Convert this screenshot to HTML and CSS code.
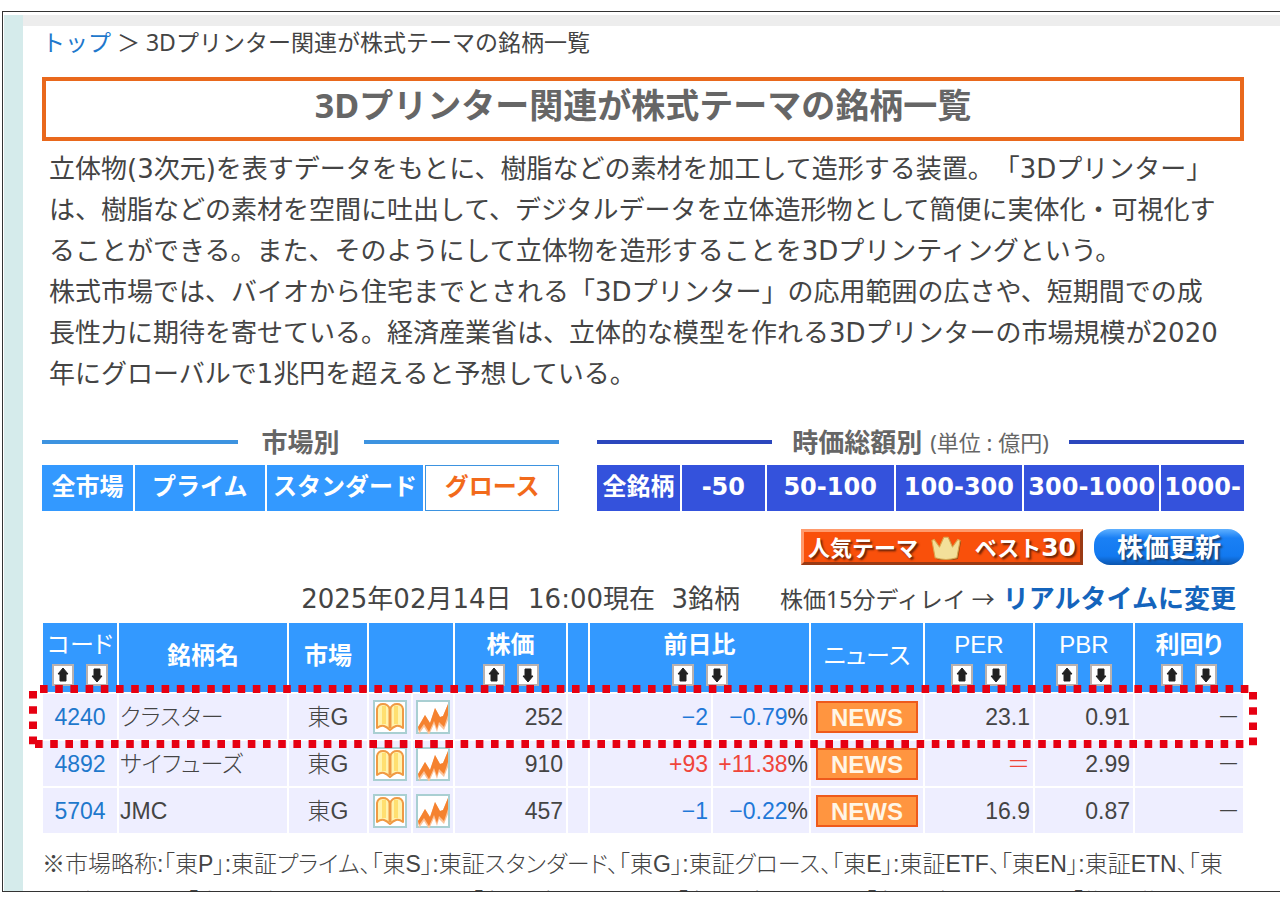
FILE: index.html
```
<!DOCTYPE html>
<html lang="ja">

<head>
    <meta charset="UTF-8">
    <meta name="viewport" content="width=device-width, initial-scale=1.0">
    <title>3Dプリンター関連が株式テーマの銘柄一覧</title>
    <link rel="stylesheet" href="styles.css">
</head>

<body>

    <!-- 共通アイコン -->
    <svg class="sprite" aria-hidden="true">
        <symbol id="up" viewBox="0 0 22 22">
            <rect x="1" y="1" width="20" height="20" fill="#fff" stroke="#b9b1ae" stroke-width="2" />
            <path d="M11 4l5 6h-2v7H8v-7H6z" fill="#222" stroke="#222" stroke-linejoin="round" />
        </symbol>
        <symbol id="down" viewBox="0 0 22 22">
            <rect x="1" y="1" width="20" height="20" fill="#fff" stroke="#b9b1ae" stroke-width="2" />
            <path d="M11 18l5-6h-2V5H8v7H6z" fill="#222" stroke="#222" stroke-linejoin="round" />
        </symbol>
        <symbol id="book" viewBox="0 0 34 34">
            <rect x="1" y="1" width="32" height="32" fill="#fff" stroke="#a9cfd2" stroke-width="2" />
            <path d="M4 9q1-5 6-5 5 0 7 5 2-5 7-5 5 0 6 5v19q-4-3-7-2t-6 4q-3-3-6-4t-7 2z" fill="#fff3ae" stroke="#f09a44" stroke-width="2" stroke-linejoin="round" />
            <path d="M11 6v18M23 6v18" fill="none" stroke="#ffdf70" stroke-width="4" />
            <path d="M17 8v20" fill="none" stroke="#f09a44" stroke-width="3" />
        </symbol>
        <symbol id="chart" viewBox="0 0 34 34">
            <rect x="1" y="1" width="32" height="32" fill="#fff" stroke="#a9cfd2" stroke-width="2" />
            <path d="M2 27l3-5 4-7 5 8 5-15 5 9 3-1 5-12v16l-4 10-5-5-2 7-3-8-5 11-5-8-5 7z" fill="#fbc39a" />
            <path d="M2 27l3-5 4-7 5 8 5-15 5 9 3-1 5-12v11l-4 12-5-5-2 7-3-8-5 11-5-8-5 7z" fill="#f5822f" />
        </symbol>
    </svg>

    <div class="frame">
        <div class="side"></div>
        <div class="page">
            <div class="topbar"></div>
            <div class="content">

                <nav class="breadcrumb"><a href="#">トップ</a> ＞ 3Dプリンター関連が株式テーマの銘柄一覧</nav>

                <h1>3Dプリンター関連が株式テーマの銘柄一覧</h1>

                <p class="description">
                    立体物(3次元)を表すデータをもとに、樹脂などの素材を加工して造形する装置。「3Dプリンター」<br>は、樹脂などの素材を空間に吐出して、デジタルデータを立体造形物として簡便に実体化・可視化す<br>ることができる。また、そのようにして立体物を造形することを3Dプリンティングという。<br>株式市場では、バイオから住宅までとされる「3Dプリンター」の応用範囲の広さや、短期間での成<br>長性力に期待を寄せている。経済産業省は、立体的な模型を作れる3Dプリンターの市場規模が2020<br>年にグローバルで1兆円を超えると予想している。
                </p>

                <div class="filters">
                    <div class="filter market">
                        <h2>市場別</h2>
                        <div class="tabs">
                            <a href="#" class="t91">全市場</a>
                            <a href="#" class="t130">プライム</a>
                            <a href="#" class="t157">スタンダード</a>
                            <a href="#" class="t132 active">グロース</a>
                        </div>
                    </div>
                    <div class="filter cap">
                        <h2>時価総額別 <small>(単位 : 億円)</small></h2>
                        <div class="tabs">
                            <a href="#" class="t83">全銘柄</a>
                            <a href="#" class="t83">-50</a>
                            <a href="#" class="t127">50-100</a>
                            <a href="#" class="t127">100-300</a>
                            <a href="#" class="t135">300-1000</a>
                            <a href="#" class="t83">1000-</a>
                        </div>
                    </div>
                </div>

                <div class="buttons">
                    <a href="#" class="best"><span>人気テーマ</span>
                        <svg width="32" height="26" viewBox="0 0 28 24" aria-hidden="true">
                            <path d="M4 22L1 6l2-1 5 7 4-9h4l4 9 5-7 2 1-3 16q-10 3-20 0z" fill="#9a4a12" transform="translate(1 1)" />
                            <path d="M4 22L1 6l2-1 5 7 4-9h4l4 9 5-7 2 1-3 16q-10 3-20 0z" fill="#f3e09a" stroke="#d9a650" stroke-linejoin="round" />
                        </svg>
                        <span>ベスト<b>30</b></span></a>
                    <button type="button" class="update">株価更新</button>
                </div>

                <div class="status">
                    <span class="date">2025年02月14日&nbsp; 16:00現在&nbsp; 3銘柄</span>
                    <span class="delay">株価15分ディレイ →</span>
                    <a href="#">リアルタイムに変更</a>
                </div>

                <div class="table-wrap">
                    <table>
                        <colgroup>
                            <col class="c-code">
                            <col class="c-name">
                            <col class="c-market">
                            <col class="c-book">
                            <col class="c-chart">
                            <col class="c-price">
                            <col class="c-gap">
                            <col class="c-diff">
                            <col class="c-pct">
                            <col class="c-news">
                            <col class="c-per">
                            <col class="c-pbr">
                            <col class="c-yield">
                        </colgroup>
                        <thead>
                            <tr>
                                <th class="thin">コード<div class="sort"><a href="#" aria-label="昇順"><svg><use href="#up" /></svg></a><a href="#" aria-label="降順"><svg><use href="#down" /></svg></a></div></th>
                                <th>銘柄名</th>
                                <th>市場</th>
                                <th colspan="2"></th>
                                <th>株価<div class="sort"><a href="#" aria-label="昇順"><svg><use href="#up" /></svg></a><a href="#" aria-label="降順"><svg><use href="#down" /></svg></a></div></th>
                                <th></th>
                                <th colspan="2">前日比<div class="sort"><a href="#" aria-label="昇順"><svg><use href="#up" /></svg></a><a href="#" aria-label="降順"><svg><use href="#down" /></svg></a></div></th>
                                <th class="thin">ニュース</th>
                                <th class="thin">PER<div class="sort"><a href="#" aria-label="昇順"><svg><use href="#up" /></svg></a><a href="#" aria-label="降順"><svg><use href="#down" /></svg></a></div></th>
                                <th class="thin">PBR<div class="sort"><a href="#" aria-label="昇順"><svg><use href="#up" /></svg></a><a href="#" aria-label="降順"><svg><use href="#down" /></svg></a></div></th>
                                <th>利回り<div class="sort"><a href="#" aria-label="昇順"><svg><use href="#up" /></svg></a><a href="#" aria-label="降順"><svg><use href="#down" /></svg></a></div></th>
                            </tr>
                        </thead>
                        <tbody>
                            <tr>
                                <td class="center"><a href="#">4240</a></td>
                                <td class="name">クラスター</td>
                                <td class="center">東G</td>
                                <td class="icon"><a href="#" aria-label="基本情報"><svg><use href="#book" /></svg></a></td>
                                <td class="icon"><a href="#" aria-label="チャート"><svg><use href="#chart" /></svg></a></td>
                                <td>252</td>
                                <td></td>
                                <td class="down">−2</td>
                                <td class="pct"><span class="down">−0.79</span>%</td>
                                <td class="icon"><a href="#" class="news">NEWS</a></td>
                                <td>23.1</td>
                                <td>0.91</td>
                                <td>－</td>
                            </tr>
                            <tr>
                                <td class="center"><a href="#">4892</a></td>
                                <td class="name">サイフューズ</td>
                                <td class="center">東G</td>
                                <td class="icon"><a href="#" aria-label="基本情報"><svg><use href="#book" /></svg></a></td>
                                <td class="icon"><a href="#" aria-label="チャート"><svg><use href="#chart" /></svg></a></td>
                                <td>910</td>
                                <td></td>
                                <td class="up">+93</td>
                                <td class="pct"><span class="up">+11.38</span>%</td>
                                <td class="icon"><a href="#" class="news">NEWS</a></td>
                                <td class="up">＝</td>
                                <td>2.99</td>
                                <td>－</td>
                            </tr>
                            <tr>
                                <td class="center"><a href="#">5704</a></td>
                                <td class="name">JMC</td>
                                <td class="center">東G</td>
                                <td class="icon"><a href="#" aria-label="基本情報"><svg><use href="#book" /></svg></a></td>
                                <td class="icon"><a href="#" aria-label="チャート"><svg><use href="#chart" /></svg></a></td>
                                <td>457</td>
                                <td></td>
                                <td class="down">−1</td>
                                <td class="pct"><span class="down">−0.22</span>%</td>
                                <td class="icon"><a href="#" class="news">NEWS</a></td>
                                <td>16.9</td>
                                <td>0.87</td>
                                <td>－</td>
                            </tr>
                        </tbody>
                    </table>
                    <!-- 1行目を囲む赤い点線 -->
                    <svg class="highlight" aria-hidden="true">
                        <line x1="11" y1="4" x2="100%" y2="4" />
                        <line x1="6" y1="59" x2="100%" y2="59" />
                    </svg>
                    <svg class="highlight-left" aria-hidden="true">
                        <line x1="4" y1="6" x2="4" y2="60" />
                    </svg>
                    <svg class="highlight-right" aria-hidden="true">
                        <line x1="4" y1="7" x2="4" y2="61" />
                    </svg>
                </div>

                <p class="note">※市場略称:「東P」:東証プライム、「東S」:東証スタンダード、「東G」:東証グロース、「東E」:東証ETF、「東EN」:東証ETN、「東<br>R」:東証REIT、「東IF」:東証インフラファンド、「名P」:名証プレミア、「名M」:名証メイン、「名N」:名証ネクスト、「札A」:札証</p>

            </div>
        </div>
    </div>

</body>

</html>
```

FILE: styles.css
```
* {
    box-sizing: border-box;
}

body {
    margin: 0;
    background-color: #fff;
    font-family: "Noto Sans", "Noto Sans CJK JP", sans-serif;
    color: #444;
}

a {
    color: #1e78cc;
    text-decoration: none;
}

.sprite {
    display: none;
}

.frame {
    display: flex;
    height: calc(100vh - 24px);
    margin: 11px 0 13px 2px;
    padding-top: 3px;
    border: 1px solid #333;
    border-right: 0;
    overflow: hidden;
}

.side {
    width: 19px;
    margin-left: 1px;
    background-color: #d5ebeb;
}

.page {
    flex: 1;
}

.topbar {
    height: 11px;
    background-color: #ededed;
}

.content {
    padding: 0 36px 0 19px;
}

.breadcrumb {
    font-size: 23px;
    line-height: 32px;
}

h1 {
    margin: 19px 0 0;
    height: 64px;
    border: 4px solid #e9681c;
    font-size: 34px;
    line-height: 48px;
    text-align: center;
    color: #666;
}

.description {
    margin: 8px 0 0;
    padding-left: 7px;
    font-family: "DejaVu Sans", "Noto Sans CJK JP", sans-serif;
    font-size: 26px;
    line-height: 41px;
    text-spacing-trim: space-all;
    white-space: nowrap;
}

/* 絞り込み */
.filters {
    display: flex;
    justify-content: space-between;
    gap: 38px;
    margin-top: 30px;
}

.market {
    flex: 517;
}

.cap {
    flex: 647;
}

h2 {
    display: flex;
    align-items: center;
    gap: 20px;
    margin: 0 0 6px;
    font-size: 26px;
    line-height: 34px;
    color: #666;
    white-space: nowrap;
}

.market h2 {
    gap: 24px;
}

h2::before,
h2::after {
    content: "";
    flex: 1;
    height: 4px;
    background-color: #3d93e0;
}

.cap h2::before,
.cap h2::after {
    background-color: #2b47bd;
}

small {
    margin-left: -12px;
    font-size: 22px;
    font-weight: normal;
}

.tabs {
    display: flex;
    gap: 2px;
    height: 46px;
    font-family: "DejaVu Sans", "Noto Sans CJK JP", sans-serif;
    font-size: 24px;
    font-weight: bold;
    line-height: 44px;
    text-align: center;
    white-space: nowrap;
}

.tabs a {
    min-width: 0;
    background-color: #3399ff;
    color: #fff;
}

.tabs .active {
    border: 1px solid #3d93e0;
    background-color: #fff;
    color: #f26a1b;
    line-height: 42px;
}

.cap .tabs a {
    background-color: #3452dc;
}

.t83 {
    flex: 83;
}

.t91 {
    flex: 91;
}

.t127 {
    flex: 127;
}

.t130 {
    flex: 130;
}

.t132 {
    flex: 132;
}

.t135 {
    flex: 135;
}

.t157 {
    flex: 157;
}

/* ボタン */
.buttons {
    display: flex;
    justify-content: flex-end;
    gap: 11px;
    margin-top: 18px;
    font-weight: bold;
}

.best {
    display: flex;
    align-items: center;
    justify-content: space-between;
    width: 282px;
    height: 36px;
    padding: 0 4px;
    border: 3px solid;
    border-color: #ff9a6c #9a3a14 #9a3a14 #ff9a6c;
    background-color: #f9500b;
    color: #fff;
    font-size: 22px;
    line-height: 30px;
    text-shadow: 2px 2px 2px #6b2408;
    white-space: nowrap;
}

.best b {
    font-family: "DejaVu Sans", sans-serif;
    font-size: 25px;
    font-weight: 700;
}

.update {
    width: 150px;
    height: 36px;
    padding: 0;
    border: 0;
    border-radius: 16px;
    background: linear-gradient(#5fb0ff, #1a80f5 25%, #1279f0 75%, #0b55ae);
    color: #fff;
    font-family: inherit;
    font-size: 26px;
    font-weight: bold;
    line-height: 34px;
    text-shadow: 2px 2px 2px #1d4272;
}

.status {
    display: flex;
    justify-content: flex-end;
    align-items: baseline;
    margin-top: 14px;
    padding-right: 8px;
    line-height: 38px;
    white-space: nowrap;
}

.date {
    margin-right: 40px;
    font-family: "DejaVu Sans", "Noto Sans CJK JP", sans-serif;
    font-size: 26px;
}

.delay {
    margin-right: 8px;
    font-size: 23px;
}

.status a {
    font-size: 26px;
    font-weight: bold;
    color: #1464bc;
}

/* 銘柄表 */
.table-wrap {
    position: relative;
    margin: 3px -1px 0;
    font-family: "Liberation Sans", "Noto Sans CJK JP", sans-serif;
}

table {
    width: 100%;
    table-layout: fixed;
    border-spacing: 2px;
    font-size: 23px;
    font-weight: 300;
    font-feature-settings: "palt";
}

th {
    height: 69px;
    padding: 0 0 4px;
    background-color: #3399ff;
    color: #fff;
    font-size: 24px;
    line-height: 38px;
    white-space: nowrap;
}

.thin {
    font-weight: normal;
}

td {
    height: 45px;
    padding: 0 3px;
    background-color: #eeeeff;
    line-height: 34px;
    text-align: right;
    white-space: nowrap;
}

.sort {
    display: flex;
    justify-content: center;
    gap: 12px;
}

.sort a {
    display: flex;
}

.sort svg {
    width: 22px;
    height: 22px;
}

td.center {
    text-align: center;
}

td.name {
    padding-left: 1px;
    text-align: left;
}

td.icon {
    padding: 0;
    text-align: center;
}

.icon svg {
    display: block;
    width: 34px;
    height: 34px;
    margin: auto;
}

.down {
    color: #1f78d8;
}

.up {
    color: #f0453a;
}

td.pct {
    padding-right: 1px;
}

.news {
    display: block;
    width: 102px;
    height: 32px;
    margin: auto;
    border: 2px solid #ee5a1c;
    background-color: #ff9540;
    color: #fff6e6;
    font-size: 24px;
    font-weight: bold;
    line-height: 30px;
}

.c-code {
    width: 74px;
}

.c-name {
    width: 168px;
}

.c-market {
    width: 78px;
}

.c-book {
    width: 42px;
}

.c-chart {
    width: 40px;
}

.c-price {
    width: 111px;
}

.c-gap {
    width: 20px;
}

.c-diff {
    width: 121px;
}

.c-pct {
    width: 96px;
}

.c-news {
    width: 112px;
}

.c-per,
.c-yield {
    width: 108px;
}

.c-pbr {
    width: 98px;
}

.highlight,
.highlight-left,
.highlight-right {
    position: absolute;
    top: 64px;
    height: 63px;
    stroke: #e60012;
    stroke-width: 8;
    stroke-dasharray: 7.6 7.6;
    pointer-events: none;
}

.highlight {
    left: -12px;
    width: calc(100% + 17px);
}

.highlight-left {
    left: -12px;
    width: 8px;
}

.highlight-right {
    right: -12px;
    width: 8px;
}

.note {
    margin: 10px 0 0;
    font-family: "Liberation Sans", "Noto Sans CJK JP", sans-serif;
    font-size: 23px;
    font-weight: 300;
    font-feature-settings: "palt";
    line-height: 38px;
    white-space: nowrap;
}
```
